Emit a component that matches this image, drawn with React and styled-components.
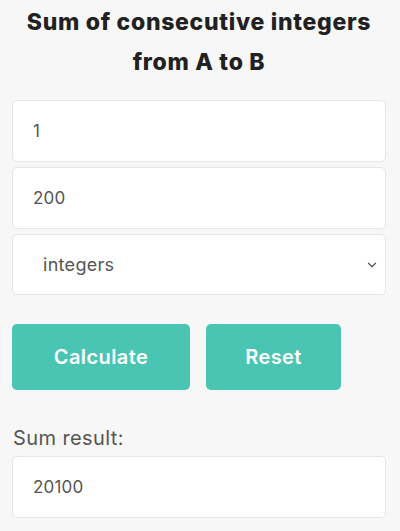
import styled, { createGlobalStyle } from "styled-components";
import { ChevronDown } from "lucide-react";

const GlobalStyle = createGlobalStyle`
  html, body {
    margin: 0;
    padding: 0;
    background-color: #f7f7f7;
  }
  * {
    box-sizing: border-box;
  }
`;

const Page = styled.div`
  font-family: "Inter", "Noto Sans", sans-serif;
  padding: 0 14px 0 12px;
  color: #222;
`;

const Title = styled.h1`
  margin: 0;
  padding-top: 2px;
  font-size: 23px;
  font-weight: 800;
  line-height: 40px;
  text-align: center;
  letter-spacing: 0.7px;
  color: #212121;
`;

const Form = styled.div`
  margin-top: 18px;
  display: flex;
  flex-direction: column;
  gap: 5px;
`;

const Field = styled.input`
  display: block;
  width: 100%;
  height: 62px;
  padding: 0 20px;
  border: 1px solid #e6e6e6;
  border-radius: 5px;
  background: #fff;
  font-family: inherit;
  font-size: 17px;
  letter-spacing: 0.2px;
  color: #555;
  outline: none;
`;

const SelectWrap = styled.div`
  position: relative;
`;

const Select = styled.select`
  display: block;
  width: 100%;
  height: 61px;
  padding: 0 30px;
  border: 1px solid #e6e6e6;
  border-radius: 5px;
  background: #fff;
  font-family: inherit;
  font-size: 18px;
  letter-spacing: 0.3px;
  color: #555;
  appearance: none;
  outline: none;
`;

const Arrow = styled(ChevronDown)`
  position: absolute;
  right: 7px;
  top: 50%;
  transform: translateY(-50%);
  color: #555;
  pointer-events: none;
`;

const Buttons = styled.div`
  display: flex;
  gap: 16px;
  margin-top: 29px;
`;

const Button = styled.button`
  width: ${(p) => p.$width}px;
  height: 66px;
  border: none;
  border-radius: 5px;
  background-color: #4ac4b3;
  color: #fff;
  font-family: inherit;
  font-size: 20px;
  font-weight: 600;
  letter-spacing: 0.4px;
  cursor: pointer;
`;

const Label = styled.div`
  margin-top: 36px;
  padding-left: 1px;
  font-size: 20px;
  letter-spacing: 0.4px;
  color: #555;
  line-height: 24px;
`;

const Result = styled(Field)`
  margin-top: 6px;
  height: 62px;
`;

export default function App() {
  return (
    <Page>
      <GlobalStyle />
      <Title>
        Sum of consecutive integers
        <br />
        from A to B
      </Title>
      <Form>
        <Field defaultValue="1" />
        <Field defaultValue="200" />
        <SelectWrap>
          <Select defaultValue="integers">
            <option value="integers">integers</option>
            <option value="even">even integers</option>
            <option value="odd">odd integers</option>
          </Select>
          <Arrow size={14} strokeWidth={2.2} />
        </SelectWrap>
      </Form>
      <Buttons>
        <Button $width={178}>Calculate</Button>
        <Button $width={135}>Reset</Button>
      </Buttons>
      <Label>Sum result:</Label>
      <Result readOnly value="20100" />
    </Page>
  );
}
